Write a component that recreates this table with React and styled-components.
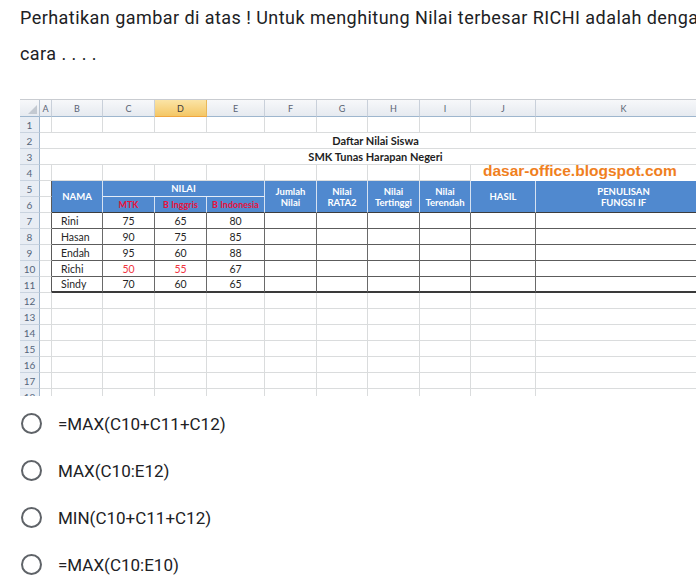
import React from 'react';
import styled, { createGlobalStyle } from 'styled-components';

const GlobalStyle = createGlobalStyle`
  html, body { margin: 0; padding: 0; background: #fff; overflow: hidden; }
  body { font-family: Roboto, "Noto Sans", Arial, sans-serif; color: #202124; }
`;

const Page = styled.div`
  width: 780px;
  padding: 0 0 0 20px;
  box-sizing: border-box;
`;

const Question = styled.div`
  width: 720px;
  font-size: 18px;
  letter-spacing: 0.45px;
  line-height: 36px;
  color: #202124;
`;

const Sheet = styled.div`
  margin-top: 27px;
  height: 296px;
  overflow: hidden;
  display: grid;
  grid-template-columns: 20px 12px 51px 52px 52px 58px 52px 51px 52px 51px 65px 176px;
  grid-template-rows: 17px repeat(18, 16px);
  border-top: 1px solid #c9ccd1;
  font-family: Lato, "Open Sans", Arial, sans-serif;
  background: #fff;
`;

const Cell = styled.div`
  grid-column: ${p => p.$c} / span ${p => p.$cs || 1};
  grid-row: ${p => p.$r} / span ${p => p.$rs || 1};
  box-sizing: border-box;
  display: flex;
  align-items: center;
  justify-content: center;
  overflow: hidden;
  white-space: nowrap;
  border-right: 1px solid #dadcdd;
  border-bottom: 1px solid #dadcdd;
`;

const Corner = styled(Cell)`
  position: relative;
  background: linear-gradient(#f7f8fa, #e6eaf0);
  border-right: 1px solid #b7c3d1;
  border-bottom: 1px solid #9eb6ce;
  &::after {
    content: '';
    position: absolute;
    right: 2px;
    bottom: 2px;
    width: 9px;
    height: 9px;
    background: #c3c9d1;
    clip-path: polygon(100% 0, 100% 100%, 0 100%);
  }
`;

const ColHead = styled(Cell)`
  background: ${p => p.$active ? 'linear-gradient(#fbe4a6, #f4c766)' : 'linear-gradient(#f7f8fa, #e6eaf0)'};
  border-right: 1px solid ${p => p.$active ? '#e9b85a' : '#c9d0da'};
  border-bottom: 1px solid ${p => p.$active ? '#f0a640' : '#9eb6ce'};
  color: ${p => p.$active ? '#3b3b3b' : '#5a6474'};
  font-size: 9px;
`;

const RowHead = styled(Cell)`
  background: #e8edf4;
  border-right: 1px solid #9eb6ce;
  border-bottom: 1px solid #c9d3df;
  color: #56657a;
  font-size: 10px;
`;

const GridCell = styled(Cell)`
  border-right-color: ${p => p.$edge ? '#5a5a5a' : '#dadcdd'};
`;

const TitleCell = styled(Cell)`
  align-items: flex-end;
  padding-bottom: 1px;
  font-weight: 700;
  font-size: 11px;
  color: #1e1e1e;
`;

const BrandCell = styled(Cell)`
  justify-content: flex-start;
  overflow: visible;
  padding-left: 12px;
  font-family: "Liberation Sans", Arial, sans-serif;
  font-weight: 700;
  font-size: 15.5px;
  color: #f0801e;
  position: relative;
  top: -2px;
  border-bottom: none;
`;

const HeadCell = styled(Cell)`
  background: #5089cf;
  color: ${p => p.$red ? '#e8123c' : '#ffffff'};
  font-weight: 700;
  font-size: ${p => p.$small ? '9px' : '9.5px'};
  line-height: 11px;
  text-align: center;
  white-space: normal;
  flex-direction: column;
  border-right: 1px solid #d6e2f2;
  border-bottom: 1px solid ${p => p.$last ? '#3d3d3d' : '#e4ecf7'};
`;

const DataCell = styled(Cell)`
  justify-content: ${p => p.$left ? 'flex-start' : 'center'};
  padding-left: ${p => p.$left ? '9px' : '0'};
  font-size: 10.5px;
  color: ${p => p.$red ? '#f0353f' : '#262626'};
  border-right: 1px solid #6a6a6a;
  border-bottom: ${p => p.$last ? '2px solid #3a3a3a' : '1px solid #5c5c5c'};
`;

const Options = styled.div`
  margin-top: 4px;
  display: flex;
  flex-direction: column;
`;

const Option = styled.label`
  display: flex;
  align-items: center;
  height: 47px;
  gap: 16px;
  font-size: 17px;
  color: #202124;
`;

const Radio = styled.span`
  width: 21px;
  height: 21px;
  margin-left: 1px;
  box-sizing: border-box;
  border: 2px solid #5f6368;
  border-radius: 50%;
  flex: none;
`;

const COLS = ['A', 'B', 'C', 'D', 'E', 'F', 'G', 'H', 'I', 'J', 'K'];
const col = l => COLS.indexOf(l) + 2;
const row = n => n + 1;

const DATA = [
  ['Rini', '75', '65', '80'],
  ['Hasan', '90', '75', '85'],
  ['Endah', '95', '60', '88'],
  ['Richi', '50', '55', '67'],
  ['Sindy', '70', '60', '65'],
];

const HEADS = [
  ['F', ['Jumlah', 'Nilai']],
  ['G', ['Nilai', 'RATA2']],
  ['H', ['Nilai', 'Tertinggi']],
  ['I', ['Nilai', 'Terendah']],
  ['J', ['HASIL']],
  ['K', ['PENULISAN', 'FUNGSI IF']],
];

const OPTIONS = ['=MAX(C10+C11+C12)', 'MAX(C10:E12)', 'MIN(C10+C11+C12)', '=MAX(C10:E10)'];

function Spreadsheet() {
  const cells = [];
  cells.push(<Corner key="corner" $c={1} $r={1} />);
  COLS.forEach(l => {
    cells.push(<ColHead key={'h' + l} $c={col(l)} $r={1} $active={l === 'D'}>{l}</ColHead>);
  });
  for (let n = 1; n <= 18; n++) {
    cells.push(<RowHead key={'r' + n} $c={1} $r={row(n)}>{n}</RowHead>);
  }
  [1, 12, 13, 14, 15, 16, 17, 18].forEach(n => {
    COLS.forEach(l => cells.push(<GridCell key={`g${l}${n}`} $c={col(l)} $r={row(n)} />));
  });
  cells.push(<TitleCell key="t2" $c={col('A')} $cs={11} $r={row(2)}>Daftar Nilai Siswa</TitleCell>);
  cells.push(<TitleCell key="t3" $c={col('A')} $cs={11} $r={row(3)}>SMK Tunas Harapan Negeri</TitleCell>);
  COLS.slice(0, 9).forEach(l => cells.push(<GridCell key={`g${l}4`} $c={col(l)} $r={row(4)} />));
  cells.push(<BrandCell key="brand" $c={col('J')} $cs={2} $r={row(4)}>dasar-office.blogspot.com</BrandCell>);
  [5, 6].forEach(n => cells.push(<GridCell key={`gA${n}`} $c={col('A')} $r={row(n)} $edge />));
  cells.push(<HeadCell key="nama" $c={col('B')} $r={row(5)} $rs={2} $last>NAMA</HeadCell>);
  cells.push(<HeadCell key="nilai" $c={col('C')} $cs={3} $r={row(5)}>NILAI</HeadCell>);
  cells.push(<HeadCell key="mtk" $c={col('C')} $r={row(6)} $red $small $last>MTK</HeadCell>);
  cells.push(<HeadCell key="bing" $c={col('D')} $r={row(6)} $red $small $last>B Inggris</HeadCell>);
  cells.push(<HeadCell key="bind" $c={col('E')} $r={row(6)} $red $small $last>B Indonesia</HeadCell>);
  HEADS.forEach(([l, lines]) => {
    cells.push(
      <HeadCell key={'hd' + l} $c={col(l)} $r={row(5)} $rs={2} $last>
        {lines.map(t => <span key={t}>{t}</span>)}
      </HeadCell>
    );
  });
  DATA.forEach((d, i) => {
    const n = 7 + i;
    const last = n === 11;
    cells.push(<GridCell key={`gA${n}`} $c={col('A')} $r={row(n)} $edge />);
    cells.push(<DataCell key={`dB${n}`} $c={col('B')} $r={row(n)} $left $last={last}>{d[0]}</DataCell>);
    ['C', 'D', 'E'].forEach((l, j) => {
      cells.push(
        <DataCell key={`d${l}${n}`} $c={col(l)} $r={row(n)} $last={last} $red={n === 10 && j < 2}>
          {d[j + 1]}
        </DataCell>
      );
    });
    ['F', 'G', 'H', 'I', 'J', 'K'].forEach(l => {
      cells.push(<DataCell key={`d${l}${n}`} $c={col(l)} $r={row(n)} $last={last} />);
    });
  });
  return <Sheet>{cells}</Sheet>;
}

export default function App() {
  return (
    <Page>
      <GlobalStyle />
      <Question>
        Perhatikan gambar di atas ! Untuk menghitung Nilai terbesar RICHI adalah dengan cara . . . .
      </Question>
      <Spreadsheet />
      <Options>
        {OPTIONS.map(o => (
          <Option key={o}>
            <Radio />
            <span>{o}</span>
          </Option>
        ))}
      </Options>
    </Page>
  );
}
